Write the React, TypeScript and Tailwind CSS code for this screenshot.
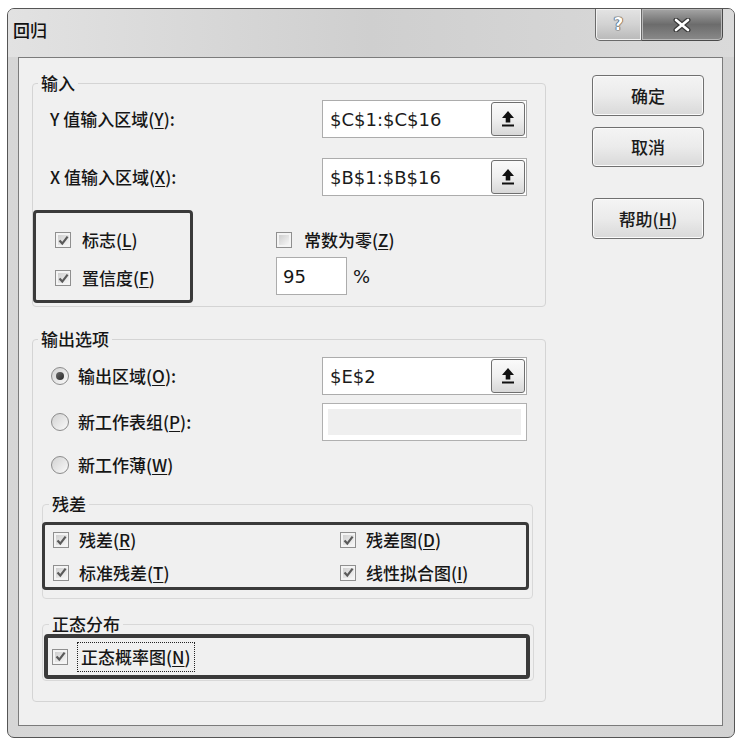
import React from "react";

const FONT = "font-['Noto_Sans_CJK_SC','Noto_Sans',sans-serif]";
const LATIN = "font-['DejaVu_Sans',sans-serif]";

function Check({ checked }: { checked: boolean }) {
  return (
    <span className="w-[16px] h-[16px] shrink-0 border border-[#8f8f8f] bg-[#f4f4f4] p-[2px] flex">
      <span className="flex-1 bg-gradient-to-br from-[#cfcfcf] to-[#f6f6f6] flex items-center justify-center">
        {checked && (
          <svg width="11" height="11" viewBox="0 0 11 11">
            <path d="M1.5 5.5 L4.3 8.6 L9.6 1.6" stroke="#5a5a5a" strokeWidth="2.2" fill="none" />
          </svg>
        )}
      </span>
    </span>
  );
}

function Radio({ checked }: { checked: boolean }) {
  return (
    <span className="w-[18px] h-[18px] shrink-0 rounded-full border border-[#8c8c8c] bg-gradient-to-br from-[#d2d2d2] to-[#fafafa] flex items-center justify-center">
      {checked && (
        <span className="w-[8px] h-[8px] rounded-full bg-gradient-to-br from-[#6a6a6a] to-[#2a2a2a]" />
      )}
    </span>
  );
}

function UploadIcon() {
  return (
    <svg width="14" height="18" viewBox="0 0 14 18">
      <path d="M7 1 L13 8 L9.3 8 L9.3 12.5 L4.7 12.5 L4.7 8 L1 8 Z" fill="#111" />
      <rect x="1" y="14.5" width="12" height="2" fill="#111" />
    </svg>
  );
}

function RefInput({ value }: { value: string }) {
  return (
    <div className="w-[205px] h-[38px] border border-[#acacac] bg-white flex items-center pl-[7px] pr-[1px]">
      <span className={`flex-1 text-[18px] text-[#1b1b1b] ${LATIN}`}>{value}</span>
      <div className="w-[34px] h-[34px] rounded-[3px] border border-[#6f6f6f] bg-gradient-to-b from-[#fafafa] via-[#efefef] to-[#d8d8d8] flex items-center justify-center">
        <UploadIcon />
      </div>
    </div>
  );
}

function Btn({ children, h }: { children: React.ReactNode; h: string }) {
  return (
    <div
      className={`w-[112px] ${h} rounded-[4px] border border-[#707070] bg-gradient-to-b from-[#f4f4f4] via-[#ebebeb] to-[#d9d9d9] flex items-center justify-center text-[17px] text-[#1b1b1b] shadow-[inset_0_0_0_1px_#fbfbfb]`}
    >
      {children}
    </div>
  );
}

const U = ({ c }: { c: string }) => <u className="underline underline-offset-[2px] decoration-1">{c}</u>;

export default function App() {
  return (
    <div className={`w-[740px] h-[744px] bg-white pt-[8px] pl-[7px] ${FONT}`}>
      <div className="w-[728px] h-[730px] border border-[#555] rounded-[7px] bg-gradient-to-r from-[#d6d6d6] via-[#dedede] to-[#d2d2d2] flex flex-col overflow-hidden">
        {/* title bar */}
        <div className="h-[48px] shrink-0 flex items-start bg-gradient-to-r from-[#e2e2e2] via-[#cfcfcf] to-[#dadada]">
          <div className="pl-[5px] pt-[10px] text-[17px] leading-[22px] text-[#111] flex-1 font-medium">回归</div>
          <div className="flex mr-[11px]">
            <div className="w-[47px] h-[32px] border border-t-0 border-[#6a6a6a] rounded-bl-[5px] bg-gradient-to-b from-[#e4e4e4] via-[#d2d2d2] to-[#b9b9b9] flex items-center justify-center shadow-[inset_0_0_0_1px_#f2f2f2]">
              <span className="text-[17px] font-bold text-white leading-none [text-shadow:0_0_1px_#333,0_0_1px_#333,0_0_1px_#333] font-['DejaVu_Sans',sans-serif]">?</span>
            </div>
            <div className="w-[81px] h-[32px] border border-t-0 border-l-0 border-[#4a4a4a] rounded-br-[5px] bg-gradient-to-b from-[#a6a6a6] via-[#6c6c6c] to-[#8a8a8a] flex items-center justify-center shadow-[inset_0_0_0_1px_#b8b8b8]">
              <svg width="18" height="14" viewBox="0 0 18 14">
                <path d="M3 2 L15 12 M15 2 L3 12" stroke="#3a3a3a" strokeWidth="5" strokeLinecap="round" />
                <path d="M3 2 L15 12 M15 2 L3 12" stroke="#fff" strokeWidth="2.6" strokeLinecap="round" />
              </svg>
            </div>
          </div>
        </div>

        {/* client */}
        <div className="ml-[10px] w-[705px] h-[669px] shrink-0 border border-[#7b7b7b] bg-[#f0f0f0] flex pl-[13px] pt-[15px] text-[#161616] font-medium">
          <div className="w-[514px] flex flex-col">
            {/* 输入 */}
            <fieldset className="border border-[#d4d4d4] rounded-[4px] pb-[3px]">
              <legend className="ml-[5px] px-[3px] text-[17px] leading-[20px]">输入</legend>
              <div className="mt-[7px] h-[38px] flex items-center">
                <div className="w-[289px] pl-[17px] text-[17px]">
                  Y 值输入区域(<U c="Y" />):
                </div>
                <RefInput value="$C$1:$C$16" />
              </div>
              <div className="mt-[20px] h-[38px] flex items-center">
                <div className="w-[289px] pl-[17px] text-[17px]">
                  X 值输入区域(<U c="X" />):
                </div>
                <RefInput value="$B$1:$B$16" />
              </div>
              <div className="mt-[14px] flex">
                <div className="w-[160px] h-[93px] border-[3px] border-[#3a3a3a] rounded-[4px] pl-[19px] pt-[12px] flex flex-col gap-[8px]">
                  <div className="h-[30px] flex items-center gap-[11px] text-[17px]">
                    <Check checked />
                    <span>标志(<U c="L" />)</span>
                  </div>
                  <div className="h-[30px] flex items-center gap-[11px] text-[17px]">
                    <Check checked />
                    <span>置信度(<U c="F" />)</span>
                  </div>
                </div>
                <div className="ml-[83px] pt-[15px] flex flex-col">
                  <div className="h-[30px] flex items-center gap-[12px] text-[17px]">
                    <Check checked={false} />
                    <span>常数为零(<U c="Z" />)</span>
                  </div>
                  <div className="mt-[2px] flex items-center">
                    <div className={`w-[71px] h-[38px] border border-[#acacac] bg-white flex items-center pl-[6px] text-[18px] font-normal ${LATIN}`}>
                      95
                    </div>
                    <span className={`ml-[6px] text-[18px] font-normal ${LATIN}`}>%</span>
                  </div>
                </div>
              </div>
            </fieldset>

            {/* 输出选项 */}
            <fieldset className="mt-[22px] border border-[#d4d4d4] rounded-[4px] pb-[20px]">
              <legend className="ml-[5px] px-[3px] text-[17px] leading-[20px]">输出选项</legend>
              <div className="mt-[8px] h-[38px] flex items-center">
                <div className="w-[289px] pl-[18px] flex items-center gap-[9px] text-[17px]">
                  <Radio checked />
                  <span>输出区域(<U c="O" />):</span>
                </div>
                <RefInput value="$E$2" />
              </div>
              <div className="mt-[8px] h-[38px] flex items-center">
                <div className="w-[289px] pl-[18px] flex items-center gap-[9px] text-[17px]">
                  <Radio checked={false} />
                  <span>新工作表组(<U c="P" />):</span>
                </div>
                <div className="w-[205px] h-[38px] border border-[#b0b0b0] bg-white p-[5px]">
                  <div className="w-full h-full bg-[#efefef]" />
                </div>
              </div>
              <div className="mt-[9px] h-[30px] flex items-center pl-[18px] gap-[9px] text-[17px]">
                <Radio checked={false} />
                <span>新工作薄(<U c="W" />)</span>
              </div>

              {/* 残差 */}
              <fieldset className="mt-[14px] ml-[9px] w-[491px] border border-[#d8d8d8] rounded-[4px] pb-[8px]">
                <legend className="ml-[6px] px-[3px] text-[17px] leading-[20px]">残差</legend>
                <div className="mt-[8px] -ml-px w-[487px] h-[68px] border-[3px] border-[#3a3a3a] rounded-[4px] pl-[8px] pt-[2px] grid grid-cols-[287px_1fr] gap-y-[5px] text-[17px]">
                  <div className="h-[26px] flex items-center gap-[10px]">
                    <Check checked />
                    <span>残差(<U c="R" />)</span>
                  </div>
                  <div className="h-[26px] flex items-center gap-[10px]">
                    <Check checked />
                    <span>残差图(<U c="D" />)</span>
                  </div>
                  <div className="h-[26px] flex items-center gap-[10px]">
                    <Check checked />
                    <span>标准残差(<U c="T" />)</span>
                  </div>
                  <div className="h-[26px] flex items-center gap-[10px]">
                    <Check checked />
                    <span>线性拟合图(<U c="I" />)</span>
                  </div>
                </div>
              </fieldset>

              {/* 正态分布 */}
              <fieldset className="mt-[15px] ml-[9px] w-[492px] border border-[#d8d8d8] rounded-[4px] pb-[1px]">
                <legend className="ml-[6px] px-[3px] text-[17px] leading-[20px]">正态分布</legend>
                <div className="ml-px w-[486px] h-[45px] border-[4px] border-[#3a3a3a] rounded-[4px] pl-[4px] flex items-center gap-[9px] text-[17px]">
                  <Check checked />
                  <span className="h-[30px] px-[3px] border border-dotted border-[#222] flex items-center">
                    正态概率图(<U c="N" />)
                  </span>
                </div>
              </fieldset>
            </fieldset>
          </div>

          {/* buttons */}
          <div className="ml-[46px] flex flex-col">
            <div className="mt-[2px]">
              <Btn h="h-[41px]">确定</Btn>
            </div>
            <div className="mt-[11px]">
              <Btn h="h-[40px]">取消</Btn>
            </div>
            <div className="mt-[31px]">
              <Btn h="h-[41px]">
                <span>
                  帮助(<U c="H" />)
                </span>
              </Btn>
            </div>
          </div>
        </div>
      </div>
    </div>
  );
}
